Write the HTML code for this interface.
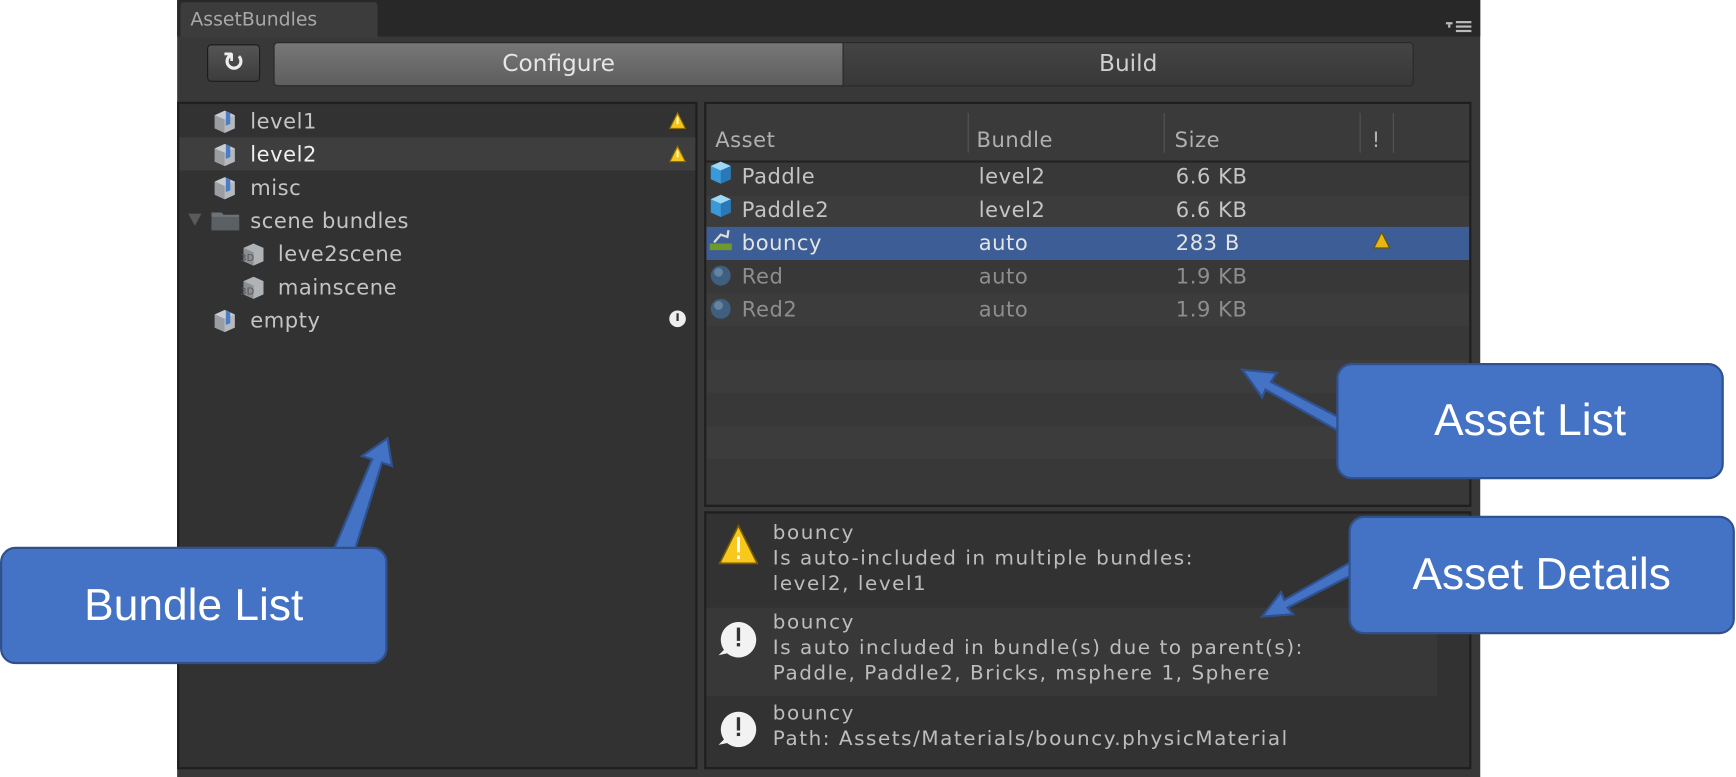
<!DOCTYPE html>
<html><head><meta charset="utf-8"><style>
html,body{margin:0;padding:0;background:#fff;width:1736px;height:777px;overflow:hidden}
#s{position:absolute;left:0;top:0;width:1568px;height:702px;transform:scale(1.10714,1.10684);transform-origin:0 0;font-family:"DejaVu Sans","Liberation Sans",sans-serif}
.a{position:absolute}
.win{left:160px;top:0;width:1177px;height:702px;background:#383838}
.tabbar{left:160px;top:0;width:1177px;height:33px;background:#282828}
.tab{left:163px;top:2px;width:178px;height:32px;background:#3c3c3c;border-radius:3px 3px 0 0;color:#a8a8a8;font-size:17px;line-height:32px;padding-left:9px;box-sizing:border-box}
.panel{background:#323232;border:2px solid #1f1f1f;box-sizing:border-box}
.t{color:#c4c4c4;font-size:19px;letter-spacing:0.5px;white-space:nowrap}
.d{color:#bdbdbd;font-size:18px;letter-spacing:1.4px;line-height:23px}
.row{position:absolute;left:0;right:0;height:30px}
.cal{background:#4472c4;border:2px solid #2f528f;border-radius:14px;color:#fff;font-family:"Liberation Sans",sans-serif;font-size:40px;display:flex;align-items:center;justify-content:center;box-sizing:border-box}
</style></head><body><div id="s">
<div class="a win"></div>
<div class="a tabbar"></div>
<div class="a tab">AssetBundles</div>
<div class="a" style="left:1306px;top:20px;width:6px;height:2px;background:#bbb"></div>
<div class="a" style="left:1308px;top:22px;width:2px;height:3px;background:#bbb"></div>
<div class="a" style="left:1315px;top:19px;width:14px;height:2px;background:#bbb;box-shadow:0 4px 0 #bbb,0 8px 0 #bbb"></div>
<div class="a" style="left:187px;top:40px;width:48px;height:34px;border-radius:4px;background:linear-gradient(#555,#3c3c3c);border:1px solid #1c1c1c;box-sizing:border-box;color:#eee;font-size:24px;font-weight:bold;text-align:center;line-height:30px">&#x21bb;</div>
<div class="a" style="left:247px;top:38px;width:515px;height:40px;border-radius:4px 0 0 4px;background:linear-gradient(#777,#5e5e5e);border:1px solid #2a2a2a;box-sizing:border-box;color:#e6e6e6;font-size:21px;text-align:center;line-height:37px">Configure</div>
<div class="a" style="left:761px;top:38px;width:516px;height:40px;border-radius:0 4px 4px 0;background:linear-gradient(#444,#383838);border:1px solid #2a2a2a;box-sizing:border-box;color:#cfcfcf;font-size:21px;text-align:center;line-height:37px">Build</div>

<div class="a panel" style="left:160px;top:92px;width:470px;height:603px">
 <div class="row" style="top:30px;background:#3e3e3e"></div>
</div>
<svg class="a" style="left:0;top:0" width="700" height="320">
 <defs>
  <g id="cube"><path d="M2 5 L11 1 L20 5 L20 17 L11 21 L2 17Z" fill="#c9ccd0"/><path d="M2 5 L11 9 L11 21 L2 17Z" fill="#9a9da2"/><path d="M11 9 L20 5 L20 17 L11 21Z" fill="#b5b8bc"/><path d="M12 1.5 L16 3.3 L16 13 L12 14.5Z" fill="#4a7cc8"/></g>
  <g id="scn"><path d="M4 5 L13 1 L22 5 L22 17 L13 21 L4 17Z" fill="#b0b3b6"/><path d="M4 5 L13 9 L13 21 L4 17Z" fill="#8b8e92"/><text x="1" y="17" font-size="9" fill="#555" font-family="DejaVu Sans">3D</text></g>
  <g id="warn"><path d="M8 1 L15 15 L1 15Z" fill="#f5c518" stroke="#8a6b00" stroke-width="1"/><rect x="7.2" y="5" width="1.6" height="6" fill="#fff"/></g>
 </defs>
 <use href="#cube" x="192" y="99"/>
 <use href="#cube" x="192" y="129"/>
 <use href="#cube" x="192" y="159"/>
 <path d="M170 193 L182 193 L176 204Z" fill="#5a5a5a"/>
 <path d="M191 192 L200 192 L202 194 L216 194 L216 208 L191 208Z" fill="#6c7276"/><rect x="191" y="196" width="25" height="12" fill="#5a6064"/>
 <use href="#scn" x="216" y="219"/>
 <use href="#scn" x="216" y="249"/>
 <use href="#cube" x="192" y="279"/>
 <use href="#warn" x="604" y="101"/>
 <use href="#warn" x="604" y="131"/>
 <circle cx="612" cy="288" r="7.5" fill="#eee"/><rect x="611" y="283" width="2" height="7" fill="#333"/>
</svg>
<div class="a t" style="left:226px;top:99px">level1</div>
<div class="a t" style="left:226px;top:129px;color:#f0f0f0">level2</div>
<div class="a t" style="left:226px;top:159px">misc</div>
<div class="a t" style="left:226px;top:189px">scene bundles</div>
<div class="a t" style="left:251px;top:219px">leve2scene</div>
<div class="a t" style="left:251px;top:249px">mainscene</div>
<div class="a t" style="left:226px;top:279px">empty</div>

<div class="a panel" style="left:636px;top:92px;width:693px;height:366px;background:#383838;overflow:hidden">
 <div class="a" style="left:0;top:0;width:693px;height:51px;background:#3a3a3a;border-bottom:2px solid #222"></div>
 <div class="a" style="left:236px;top:8px;width:1px;height:36px;background:#555"></div>
 <div class="a" style="left:413px;top:8px;width:1px;height:36px;background:#555"></div>
 <div class="a" style="left:590px;top:8px;width:1px;height:36px;background:#555"></div>
 <div class="a" style="left:620px;top:8px;width:1px;height:36px;background:#555"></div>
 <div class="a t" style="left:8px;top:22px;color:#b0b0b0">Asset</div>
 <div class="a t" style="left:244px;top:22px;color:#b0b0b0">Bundle</div>
 <div class="a t" style="left:423px;top:22px;color:#b0b0b0">Size</div>
 <div class="a t" style="left:601px;top:22px;color:#b0b0b0">!</div>
 <div class="row" style="top:53px;background:#383838"></div>
 <div class="row" style="top:83px;background:#3c3c3c"></div>
 <div class="row" style="top:111px;background:#3c5d95"></div>
 <div class="row" style="top:141px;background:#383838"></div>
 <div class="row" style="top:171px;background:#3c3c3c"></div>
 <div class="row" style="top:201px;background:#383838"></div>
 <div class="row" style="top:231px;background:#3c3c3c"></div>
 <div class="row" style="top:261px;background:#383838"></div>
 <div class="row" style="top:291px;background:#3c3c3c"></div>
 <div class="row" style="top:321px;background:#383838"></div>
</div>
<svg class="a" style="left:636px;top:140px" width="693" height="160">
 <g><path d="M6 10 L15 6 L24 10 L24 22 L15 26 L6 22Z" fill="#3a9ad9"/><path d="M6 10 L15 6 L24 10 L15 14Z" fill="#9fd7f5"/><path d="M15 14 L24 10 L24 22 L15 26Z" fill="#2a78b8"/></g>
 <g transform="translate(0,30)"><path d="M6 10 L15 6 L24 10 L24 22 L15 26 L6 22Z" fill="#3a9ad9"/><path d="M6 10 L15 6 L24 10 L15 14Z" fill="#9fd7f5"/><path d="M15 14 L24 10 L24 22 L15 26Z" fill="#2a78b8"/></g>
 <rect x="5" y="80" width="20" height="6" fill="#6e9a2a"/><path d="M9 79 L15 72 L21 74 L22 68" stroke="#ddd" stroke-width="2" fill="none"/>
 <circle cx="15" cy="109" r="9" fill="#3f5f80"/><circle cx="13" cy="106" r="4" fill="#7d9bb8" opacity=".6"/>
 <circle cx="15" cy="139" r="9" fill="#3f5f80"/><circle cx="13" cy="136" r="4" fill="#7d9bb8" opacity=".6"/>
 <path d="M612 70 L619 84 L605 84Z" fill="#e8b810" stroke="#6b5200"/>
</svg>
<div class="a t" style="left:670px;top:149px">Paddle</div><div class="a t" style="left:884px;top:149px">level2</div><div class="a t" style="left:1062px;top:149px">6.6 KB</div>
<div class="a t" style="left:670px;top:179px">Paddle2</div><div class="a t" style="left:884px;top:179px">level2</div><div class="a t" style="left:1062px;top:179px">6.6 KB</div>
<div class="a t" style="left:670px;top:209px;color:#e4e4e4">bouncy</div><div class="a t" style="left:884px;top:209px;color:#e4e4e4">auto</div><div class="a t" style="left:1062px;top:209px;color:#e4e4e4">283 B</div>
<div class="a t" style="left:670px;top:239px;color:#8e8e8e">Red</div><div class="a t" style="left:884px;top:239px;color:#8e8e8e">auto</div><div class="a t" style="left:1062px;top:239px;color:#8e8e8e">1.9 KB</div>
<div class="a t" style="left:670px;top:269px;color:#8e8e8e">Red2</div><div class="a t" style="left:884px;top:269px;color:#8e8e8e">auto</div><div class="a t" style="left:1062px;top:269px;color:#8e8e8e">1.9 KB</div>

<div class="a panel" style="left:636px;top:462px;width:693px;height:233px"></div>
<div class="a" style="left:638px;top:549px;width:660px;height:80px;background:#383838"></div>
<svg class="a" style="left:636px;top:462px" width="80" height="233">
 <path d="M31 13 L48 47 L14 47Z" fill="#f8c81c" stroke="#7a5c00" stroke-width="1.5"/><rect x="29.7" y="23" width="2.6" height="14" fill="#fff"/><rect x="29.7" y="40" width="2.6" height="3" fill="#fff"/>
 <path d="M31 100 a16 16 0 1 0 0.1 0Z" fill="#f2f2f2"/><path d="M18 125 L13 130 L22 128Z" fill="#f2f2f2"/><rect x="29.5" y="105" width="3" height="12" fill="#333"/><rect x="29.5" y="119" width="3" height="3" fill="#333"/>
 <path d="M31 181 a16 16 0 1 0 0.1 0Z" fill="#f2f2f2"/><path d="M18 206 L13 211 L22 209Z" fill="#f2f2f2"/><rect x="29.5" y="186" width="3" height="12" fill="#333"/><rect x="29.5" y="200" width="3" height="3" fill="#333"/>
</svg>
<div class="a t d" style="left:698px;top:470px">bouncy<br>Is auto-included in multiple bundles:<br>level2, level1</div>
<div class="a t d" style="left:698px;top:551px">bouncy<br>Is auto included in bundle(s) due to parent(s):<br>Paddle, Paddle2, Bricks, msphere 1, Sphere</div>
<div class="a t d" style="left:698px;top:633px">bouncy<br>Path: Assets/Materials/bouncy.physicMaterial</div>

<svg class="a" style="left:0;top:0" width="1568" height="702">
 <path d="M300 500 L336 415 L327 412 L350 396 L354 421 L345 418 L318 505Z" fill="#4472c4" stroke="#2f528f" stroke-width="2"/>
 <path d="M1215 380 L1148 345 L1153 337 L1122 334 L1140 359 L1143 352 L1210 390Z" fill="#4472c4" stroke="#2f528f" stroke-width="2"/>
 <path d="M1225 505 L1160 542 L1157 535 L1140 557 L1168 555 L1163 549 L1230 515Z" fill="#4472c4" stroke="#2f528f" stroke-width="2"/>
</svg>
<div class="a cal" style="left:0;top:494px;width:350px;height:106px">Bundle List</div>
<div class="a cal" style="left:1207px;top:328px;width:350px;height:105px">Asset List</div>
<div class="a cal" style="left:1218px;top:466px;width:349px;height:107px">Asset Details</div>
</div></body></html>
